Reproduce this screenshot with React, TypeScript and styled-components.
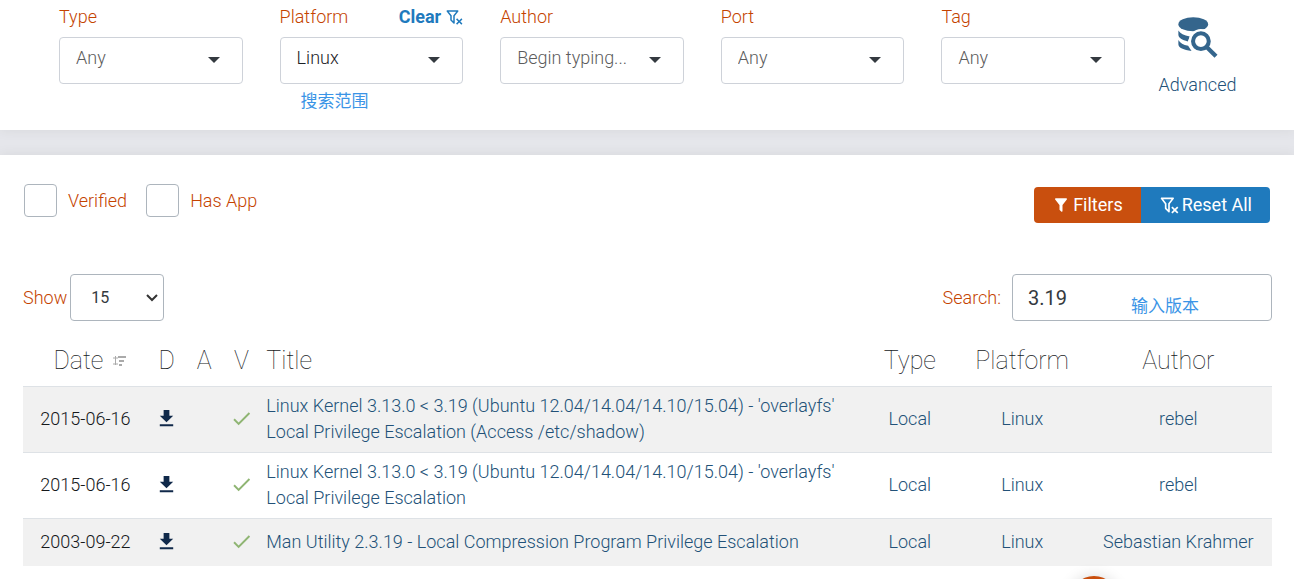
import React from 'react';
import styled, { createGlobalStyle } from 'styled-components';

const GlobalStyle = createGlobalStyle`
  *, *::before, *::after { box-sizing: border-box; }
  body {
    margin: 0;
    background: #e5e6eb;
    color: #15181b;
    font-family: Roboto, "Noto Sans CJK SC", sans-serif;
    font-size: 18px;
    font-weight: 300;
    line-height: 26px;
  }
  button, input, select { font: inherit; margin: 0; }
  a { color: #225178; text-decoration: none; }
`;

const ORANGE = '#c94f0e';
const LABEL_ORANGE = '#c44300';
const BLUE = '#1f7abd';

const Card = styled.section`
  background: #fff;
  box-shadow: 0 0 12px rgba(60, 60, 40, 0.08);
`;

const FilterBar = styled(Card)`
  display: flex;
  align-items: flex-start;
  height: 130px;
  padding: 4px 24px 0 59px;
  margin-bottom: 25px;
`;

const FilterGrid = styled.div`
  flex: 1;
  display: grid;
  grid-template-columns: repeat(5, minmax(0, 1fr));
  column-gap: 37px;
`;

const FieldHead = styled.div`
  display: flex;
  justify-content: space-between;
  align-items: center;
  height: 26px;
  margin-bottom: 7px;
`;

const Label = styled.label`
  color: ${LABEL_ORANGE};
`;

const ClearButton = styled.button`
  display: flex;
  align-items: center;
  gap: 4px;
  padding: 0;
  border: 0;
  background: none;
  color: ${BLUE};
  font-weight: 700;
  cursor: pointer;
`;

const SelectWrap = styled.div`
  position: relative;
`;

const PickSelect = styled.select<{ $chosen?: boolean }>`
  appearance: none;
  display: block;
  width: 100%;
  height: 47px;
  padding: 0 40px 5px 16px;
  border: 1px solid #ced2d9;
  border-radius: 4px;
  background: #fff;
  color: ${p => (p.$chosen ? '#1c2126' : '#5c5c5c')};
`;

const Caret = styled.svg`
  position: absolute;
  right: 23px;
  top: 20px;
  pointer-events: none;
`;

const Note = styled.span`
  color: #3a94e6;
  font-size: 17px;
  font-weight: 400;
  line-height: 24px;
`;

const FieldNote = styled(Note)`
  display: block;
  padding: 5px 0 0 21px;
`;

const Advanced = styled.a`
  width: 145px;
  display: flex;
  flex-direction: column;
  align-items: center;
  gap: 10px;
  padding-top: 7px;
`;

const Results = styled(Card)`
  padding: 29px 22px 13px 23px;
`;

const Bar = styled.div`
  display: flex;
  justify-content: space-between;
  align-items: center;
`;

const CheckBar = styled(Bar)`
  align-items: flex-start;
  padding: 0 2px 0 1px;
  margin-bottom: 51px;
`;

const Group = styled.div<{ $gap?: number }>`
  display: flex;
  align-items: center;
  gap: ${p => p.$gap ?? 0}px;
`;

const CheckLabel = styled.label`
  display: flex;
  align-items: center;
  gap: 11px;
  color: ${LABEL_ORANGE};
`;

const Check = styled.input`
  appearance: none;
  width: 33px;
  height: 33px;
  border: 1px solid #adb5bd;
  border-radius: 4px;
  background: #fff;
`;

const ButtonGroup = styled.div`
  display: flex;
  margin-top: 3px;
  border-radius: 4px;
  overflow: hidden;
`;

const ActionButton = styled.button<{ $color: string }>`
  display: flex;
  align-items: center;
  justify-content: center;
  gap: 3px;
  height: 36px;
  padding: 0 18px;
  border: 0;
  background: ${p => p.$color};
  color: #fff;
  font-weight: 400;
  cursor: pointer;
`;

const LengthSelect = styled.select`
  appearance: none;
  display: block;
  width: 94px;
  height: 47px;
  padding: 0 20px;
  border: 1px solid #adb5bd;
  border-radius: 4px;
  background: #fff;
  color: #343a40;
  font-size: 16px;
  font-weight: 400;
`;

const Chevron = styled.svg`
  position: absolute;
  right: 6px;
  top: 19px;
  pointer-events: none;
`;

const SearchInput = styled.input`
  display: block;
  width: 260px;
  height: 47px;
  padding: 0 15px;
  border: 1px solid #adb5bd;
  border-radius: 4px;
  color: #343a40;
  font-size: 20px;
  font-weight: 400;
`;

const SearchNote = styled(Note)`
  position: absolute;
  left: 119px;
  top: 20px;
  pointer-events: none;
`;

const Table = styled.table`
  width: 100%;
  margin-top: 13px;
  border-collapse: collapse;
  table-layout: fixed;
`;

const Col = styled.col<{ $width?: string }>`
  width: ${p => p.$width ?? 'auto'};
`;

const Th = styled.th<{ $left?: boolean }>`
  height: 52px;
  padding: ${p => (p.$left ? '2px 0 0 6px' : '2px 0 0')};
  font-size: 25px;
  font-weight: 100;
  line-height: 38px;
  text-align: ${p => (p.$left ? 'left' : 'center')};
  white-space: nowrap;
`;

const SortHead = styled.span`
  display: flex;
  justify-content: center;
  align-items: center;
  gap: 10px;
  padding-left: 9px;
`;

const Row = styled.tr`
  border-top: 1px solid #dee2e6;
  &:nth-child(odd) { background: #f1f1f1; }
`;

const Td = styled.td<{ $left?: boolean }>`
  height: 48px;
  padding: ${p => (p.$left ? '6px 0 7px 6px' : '6px 0 7px')};
  text-align: ${p => (p.$left ? 'left' : 'center')};
  vertical-align: middle;
  svg { display: block; margin: 0 auto; }
`;

const TitleText = styled.a`
  display: block;
  max-width: 590px;
`;

const IconLink = styled.a`
  color: #10294a;
`;

const TopButton = styled.button`
  position: fixed;
  right: 176px;
  bottom: -45px;
  width: 48px;
  height: 48px;
  border: 0;
  border-radius: 50%;
  background: ${ORANGE};
  box-shadow: 0 2px 16px rgba(0, 0, 0, 0.2);
`;

const PATHS = {
  filter:
    'M14,12V19.88C14.04,20.18 13.94,20.5 13.71,20.71C13.32,21.1 12.69,21.1 12.3,20.71L10.29,18.7C10.06,18.47 9.96,18.16 10,17.87V12H9.97L4.21,4.62C3.87,4.19 3.95,3.56 4.38,3.22C4.57,3.08 4.78,3 5,3V3H19V3C19.22,3 19.43,3.08 19.62,3.22C20.05,3.56 20.13,4.19 19.79,4.62L14.03,12H14Z',
  filterRemove:
    'M14.73,20.83L17.58,18L14.73,15.17L16.15,13.76L19,16.57L21.8,13.76L23.22,15.17L20.41,18L23.22,20.83L21.8,22.24L19,19.4L16.15,22.24L14.73,20.83M13,19.88C13.04,20.18 12.94,20.5 12.71,20.71C12.32,21.1 11.69,21.1 11.29,20.71L7.29,16.7C7.06,16.47 6.96,16.16 7,15.87V10.75L2.21,4.62C1.87,4.19 1.95,3.56 2.38,3.22C2.57,3.08 2.78,3 3,3H17C17.22,3 17.43,3.08 17.62,3.22C18.05,3.56 18.13,4.19 17.79,4.62L13,10.75V19.88M5.04,5L9,10.06V15.58L11,17.58V10.05L14.96,5H5.04Z',
  download: 'M5,20H19V18H5M19,9H15V3H9V9H5L12,16L19,9Z',
  check: 'M21,7L9,19L3.5,13.5L4.91,12.09L9,16.17L19.59,5.59L21,7Z',
};

function Icon({ name, size, color }: { name: keyof typeof PATHS; size: number; color?: string }) {
  return (
    <svg width={size} height={size} viewBox="0 0 24 24" fill={color ?? 'currentColor'} aria-hidden="true">
      <path d={PATHS[name]} />
    </svg>
  );
}

function DatabaseSearchIcon() {
  return (
    <svg width="51" height="51" viewBox="1 0 24 24" fill="#34658c" aria-hidden="true">
      <ellipse cx="11" cy="6.2" rx="7" ry="3.3" />
      <path d="M4 9.2C4.8 10.6 6.6 11.6 9.4 12L8.4 14.3C5.8 13.8 4 12.6 4 11.2Z" />
      <path d="M4 13.6C4.8 15 6.3 15.9 8.6 16.3L10.2 18.8C6.5 18.5 4 17.3 4 15.7Z" />
      <circle cx="14.6" cy="14.2" r="5.7" fill="#fff" />
      <circle cx="14.6" cy="14.2" r="3.7" fill="none" stroke="#34658c" strokeWidth="1.9" />
      <path d="M17.2 16.8L21.7 21.3" fill="none" stroke="#34658c" strokeWidth="2" />
    </svg>
  );
}

function SortIcon() {
  return (
    <svg width="13" height="12" viewBox="0 0 13 12" fill="none" stroke="#aaa" aria-hidden="true">
      <path d="M2.5 1v9M0 3h5M0 9h5" strokeWidth="1" />
      <path d="M5 2h8M6 6h5M6 10h3" strokeWidth="2" />
    </svg>
  );
}

interface FilterProps {
  id: string;
  label: string;
  value: string;
  chosen?: boolean;
  note?: string;
}

const FILTERS: FilterProps[] = [
  { id: 'type', label: 'Type', value: 'Any' },
  { id: 'platform', label: 'Platform', value: 'Linux', chosen: true, note: '搜索范围' },
  { id: 'author', label: 'Author', value: 'Begin typing...' },
  { id: 'port', label: 'Port', value: 'Any' },
  { id: 'tag', label: 'Tag', value: 'Any' },
];

function Filter({ id, label, value, chosen, note }: FilterProps) {
  return (
    <div>
      <FieldHead>
        <Label htmlFor={id}>{label}</Label>
        {chosen && (
          <ClearButton type="button">
            Clear <Icon name="filterRemove" size={18} />
          </ClearButton>
        )}
      </FieldHead>
      <SelectWrap>
        <PickSelect id={id} $chosen={chosen}>
          <option>{value}</option>
        </PickSelect>
        <Caret width="12" height="6" viewBox="0 0 12 6">
          <path d="M0 0h12L6 6z" fill="#343a40" />
        </Caret>
      </SelectWrap>
      {note && <FieldNote>{note}</FieldNote>}
    </div>
  );
}

const ROWS = [
  {
    date: '2015-06-16',
    title: "Linux Kernel 3.13.0 < 3.19 (Ubuntu 12.04/14.04/14.10/15.04) - 'overlayfs' Local Privilege Escalation (Access /etc/shadow)",
    author: 'rebel',
  },
  {
    date: '2015-06-16',
    title: "Linux Kernel 3.13.0 < 3.19 (Ubuntu 12.04/14.04/14.10/15.04) - 'overlayfs' Local Privilege Escalation",
    author: 'rebel',
  },
  {
    date: '2003-09-22',
    title: 'Man Utility 2.3.19 - Local Compression Program Privilege Escalation',
    author: 'Sebastian Krahmer',
  },
];

export default function App() {
  return (
    <>
      <GlobalStyle />
      <FilterBar>
        <FilterGrid>
          {FILTERS.map(f => (
            <Filter key={f.id} {...f} />
          ))}
        </FilterGrid>
        <Advanced href="#advanced">
          <DatabaseSearchIcon />
          Advanced
        </Advanced>
      </FilterBar>
      <Results>
        <CheckBar>
          <Group $gap={19}>
            <CheckLabel>
              <Check type="checkbox" />
              Verified
            </CheckLabel>
            <CheckLabel>
              <Check type="checkbox" />
              Has App
            </CheckLabel>
          </Group>
          <ButtonGroup>
            <ActionButton type="button" $color={ORANGE}>
              <Icon name="filter" size={18} />
              Filters
            </ActionButton>
            <ActionButton type="button" $color={BLUE}>
              <Icon name="filterRemove" size={20} />
              Reset All
            </ActionButton>
          </ButtonGroup>
        </CheckBar>
        <Bar>
          <Group $gap={3}>
            <Label htmlFor="length">Show</Label>
            <SelectWrap>
              <LengthSelect id="length">
                <option>15</option>
              </LengthSelect>
              <Chevron width="12" height="9" viewBox="0 0 12 9">
                <path d="M1 2l5 5 5-5" fill="none" stroke="#343434" strokeWidth="2" />
              </Chevron>
            </SelectWrap>
          </Group>
          <Group $gap={11}>
            <Label htmlFor="search">Search:</Label>
            <SelectWrap>
              <SearchInput id="search" type="text" defaultValue="3.19" />
              <SearchNote>输入版本</SearchNote>
            </SelectWrap>
          </Group>
        </Bar>
        <Table>
          <colgroup>
            <Col $width="10%" />
            <Col $width="3%" />
            <Col $width="3%" />
            <Col $width="3%" />
            <Col />
            <Col $width="8%" />
            <Col $width="10%" />
            <Col $width="15%" />
          </colgroup>
          <thead>
            <tr>
              <Th>
                <SortHead>
                  Date
                  <SortIcon />
                </SortHead>
              </Th>
              <Th>D</Th>
              <Th>A</Th>
              <Th>V</Th>
              <Th $left>Title</Th>
              <Th>Type</Th>
              <Th>Platform</Th>
              <Th>Author</Th>
            </tr>
          </thead>
          <tbody>
            {ROWS.map((row, i) => (
              <Row key={i}>
                <Td>{row.date}</Td>
                <Td>
                  <IconLink href="#download" aria-label="Download">
                    <Icon name="download" size={23} />
                  </IconLink>
                </Td>
                <Td />
                <Td>
                  <Icon name="check" size={23} color="#8fb573" />
                </Td>
                <Td $left>
                  <TitleText href="#exploit">{row.title}</TitleText>
                </Td>
                <Td>
                  <a href="#local">Local</a>
                </Td>
                <Td>
                  <a href="#linux">Linux</a>
                </Td>
                <Td>
                  <a href="#author">{row.author}</a>
                </Td>
              </Row>
            ))}
          </tbody>
        </Table>
      </Results>
      <TopButton type="button" aria-label="Back to top" />
    </>
  );
}
